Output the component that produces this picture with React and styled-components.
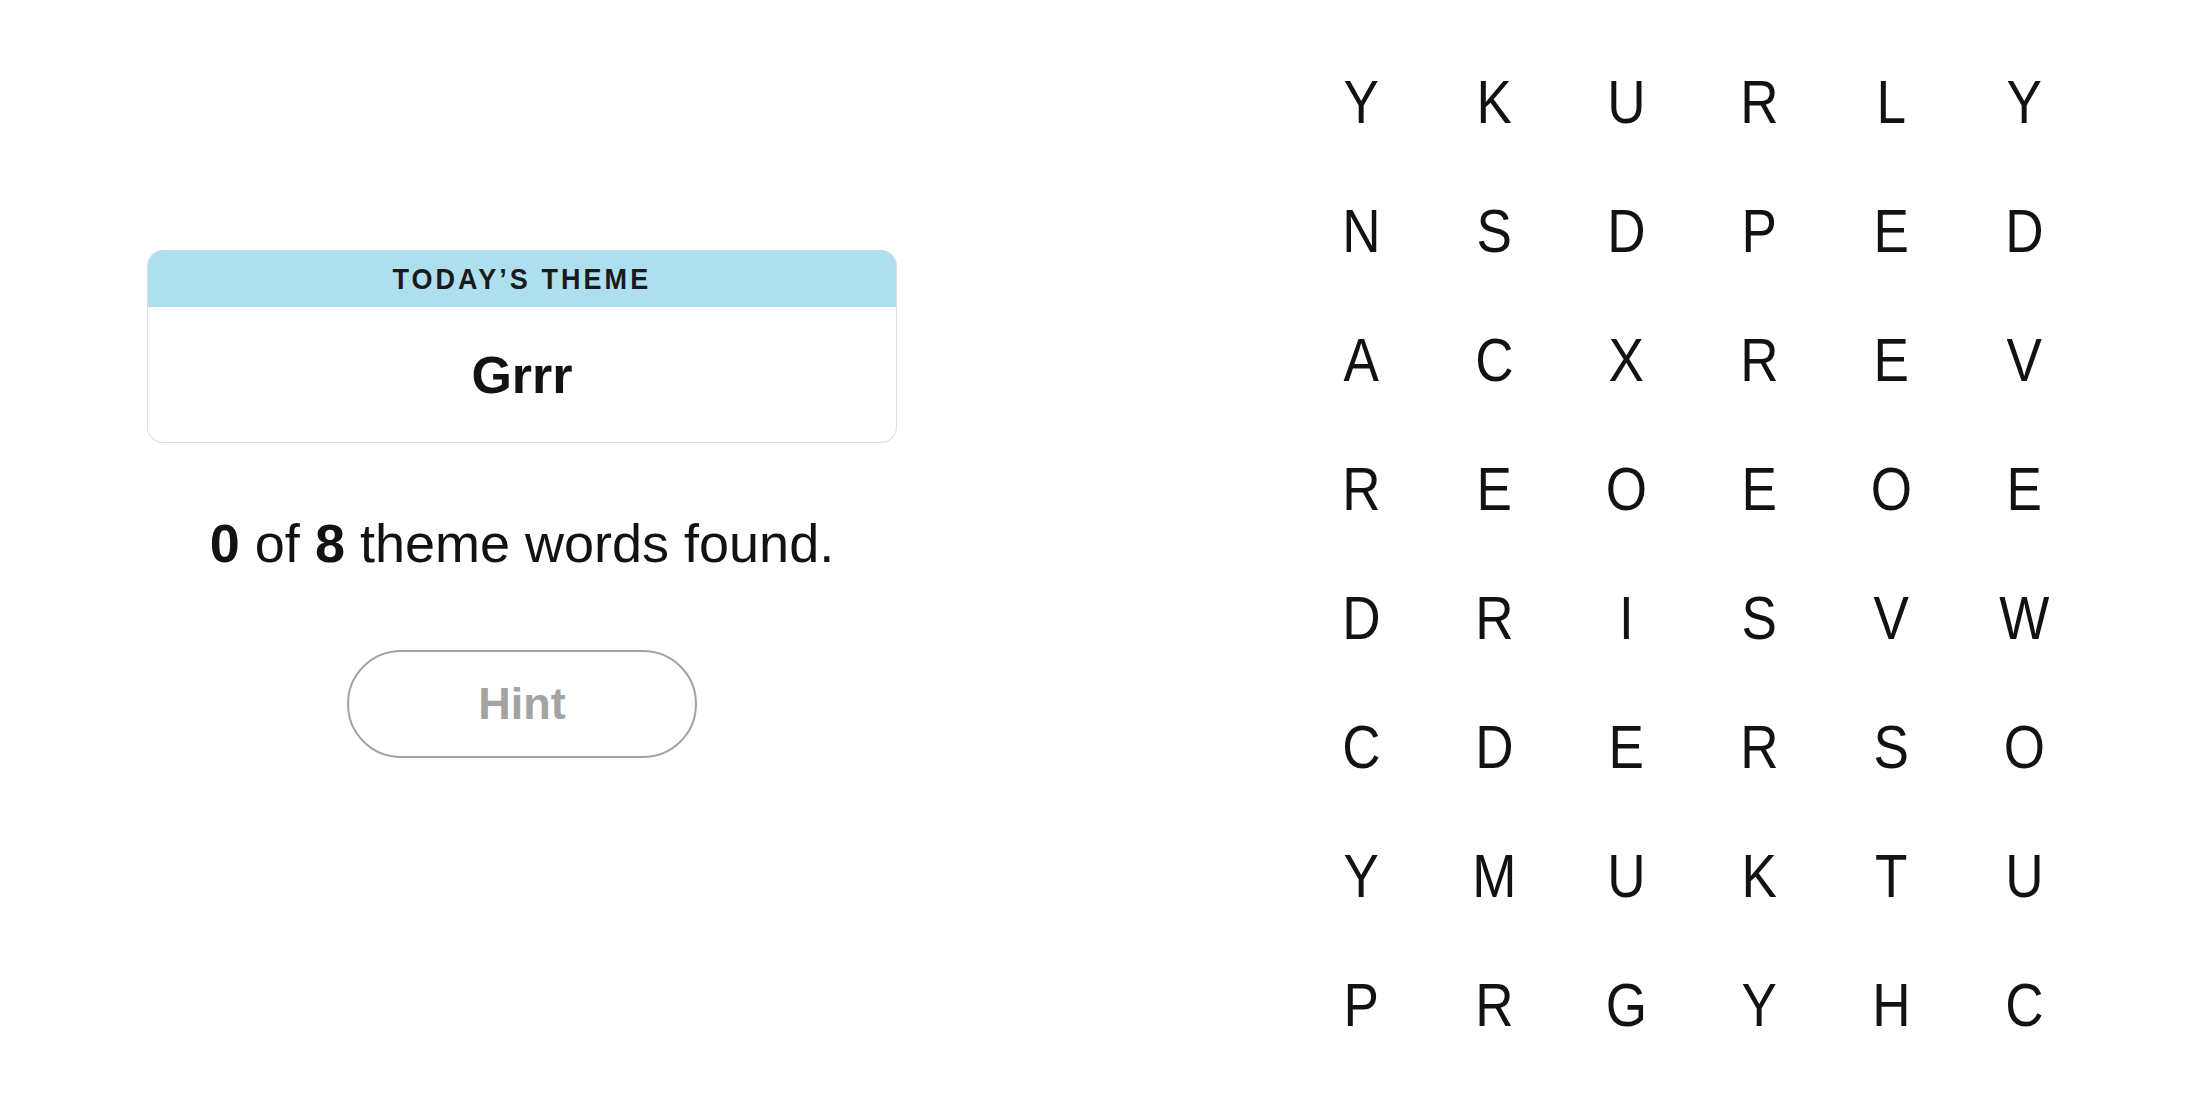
import React from "react";
import styled, { createGlobalStyle } from "styled-components";

const GlobalStyle = createGlobalStyle`
  html, body {
    margin: 0;
    padding: 0;
    background: #fff;
  }
  body {
    font-family: "Liberation Sans", Arial, sans-serif;
    color: #121212;
  }
`;

const Page = styled.main`
  display: flex;
  align-items: flex-start;
  gap: 398px;
  padding: 38px 0 0 147px;
`;

const Sidebar = styled.section`
  width: 750px;
  margin-top: 212px;
  display: flex;
  flex-direction: column;
  align-items: center;
`;

const ThemeCard = styled.div`
  width: 100%;
  box-sizing: border-box;
  border: 1px solid #dedede;
  border-top: none;
  border-radius: 16px;
  overflow: hidden;
`;

const ThemeHeader = styled.div`
  height: 57px;
  background: #aedfee;
  display: flex;
  align-items: center;
  justify-content: center;
  font-size: 30px;
  font-weight: 700;
  letter-spacing: 3.4px;
  text-transform: uppercase;
  color: #1a1a1a;
  span {
    display: inline-block;
    transform: scaleX(0.9);
  }
`;

const ThemeTitle = styled.div`
  height: 135px;
  display: flex;
  align-items: center;
  justify-content: center;
  font-size: 52px;
  font-weight: 700;
`;

const Progress = styled.p`
  margin: 68px 0 0;
  font-size: 54px;
  line-height: 65px;
  b {
    font-weight: 700;
  }
`;

const HintButton = styled.button`
  margin-top: 74px;
  width: 350px;
  height: 108px;
  border: 2.5px solid #a3a3a3;
  border-radius: 54px;
  background: #fff;
  color: #a3a3a3;
  font-family: "Liberation Sans", Arial, sans-serif;
  font-size: 45px;
  font-weight: 700;
  cursor: default;
`;

const Board = styled.div`
  display: grid;
  grid-template-columns: repeat(6, 132.6px);
  grid-auto-rows: 129px;
`;

const Letter = styled.span`
  display: flex;
  align-items: center;
  justify-content: center;
  font-size: 61px;
  line-height: 1;
  color: #121212;
  transform: scaleX(0.87);
`;

const rows = [
  "YKURLY",
  "NSDPED",
  "ACXREV",
  "REOEOE",
  "DRISVW",
  "CDERSO",
  "YMUKTU",
  "PRGYHC",
];

export default function App() {
  return (
    <>
      <GlobalStyle />
      <Page>
        <Sidebar>
          <ThemeCard>
            <ThemeHeader>
              <span>Today’s Theme</span>
            </ThemeHeader>
            <ThemeTitle>Grrr</ThemeTitle>
          </ThemeCard>
          <Progress>
            <b>0</b> of <b>8</b> theme words found.
          </Progress>
          <HintButton>Hint</HintButton>
        </Sidebar>
        <Board>
          {rows.map((row, r) =>
            row.split("").map((ch, c) => <Letter key={r + "-" + c}>{ch}</Letter>)
          )}
        </Board>
      </Page>
    </>
  );
}
